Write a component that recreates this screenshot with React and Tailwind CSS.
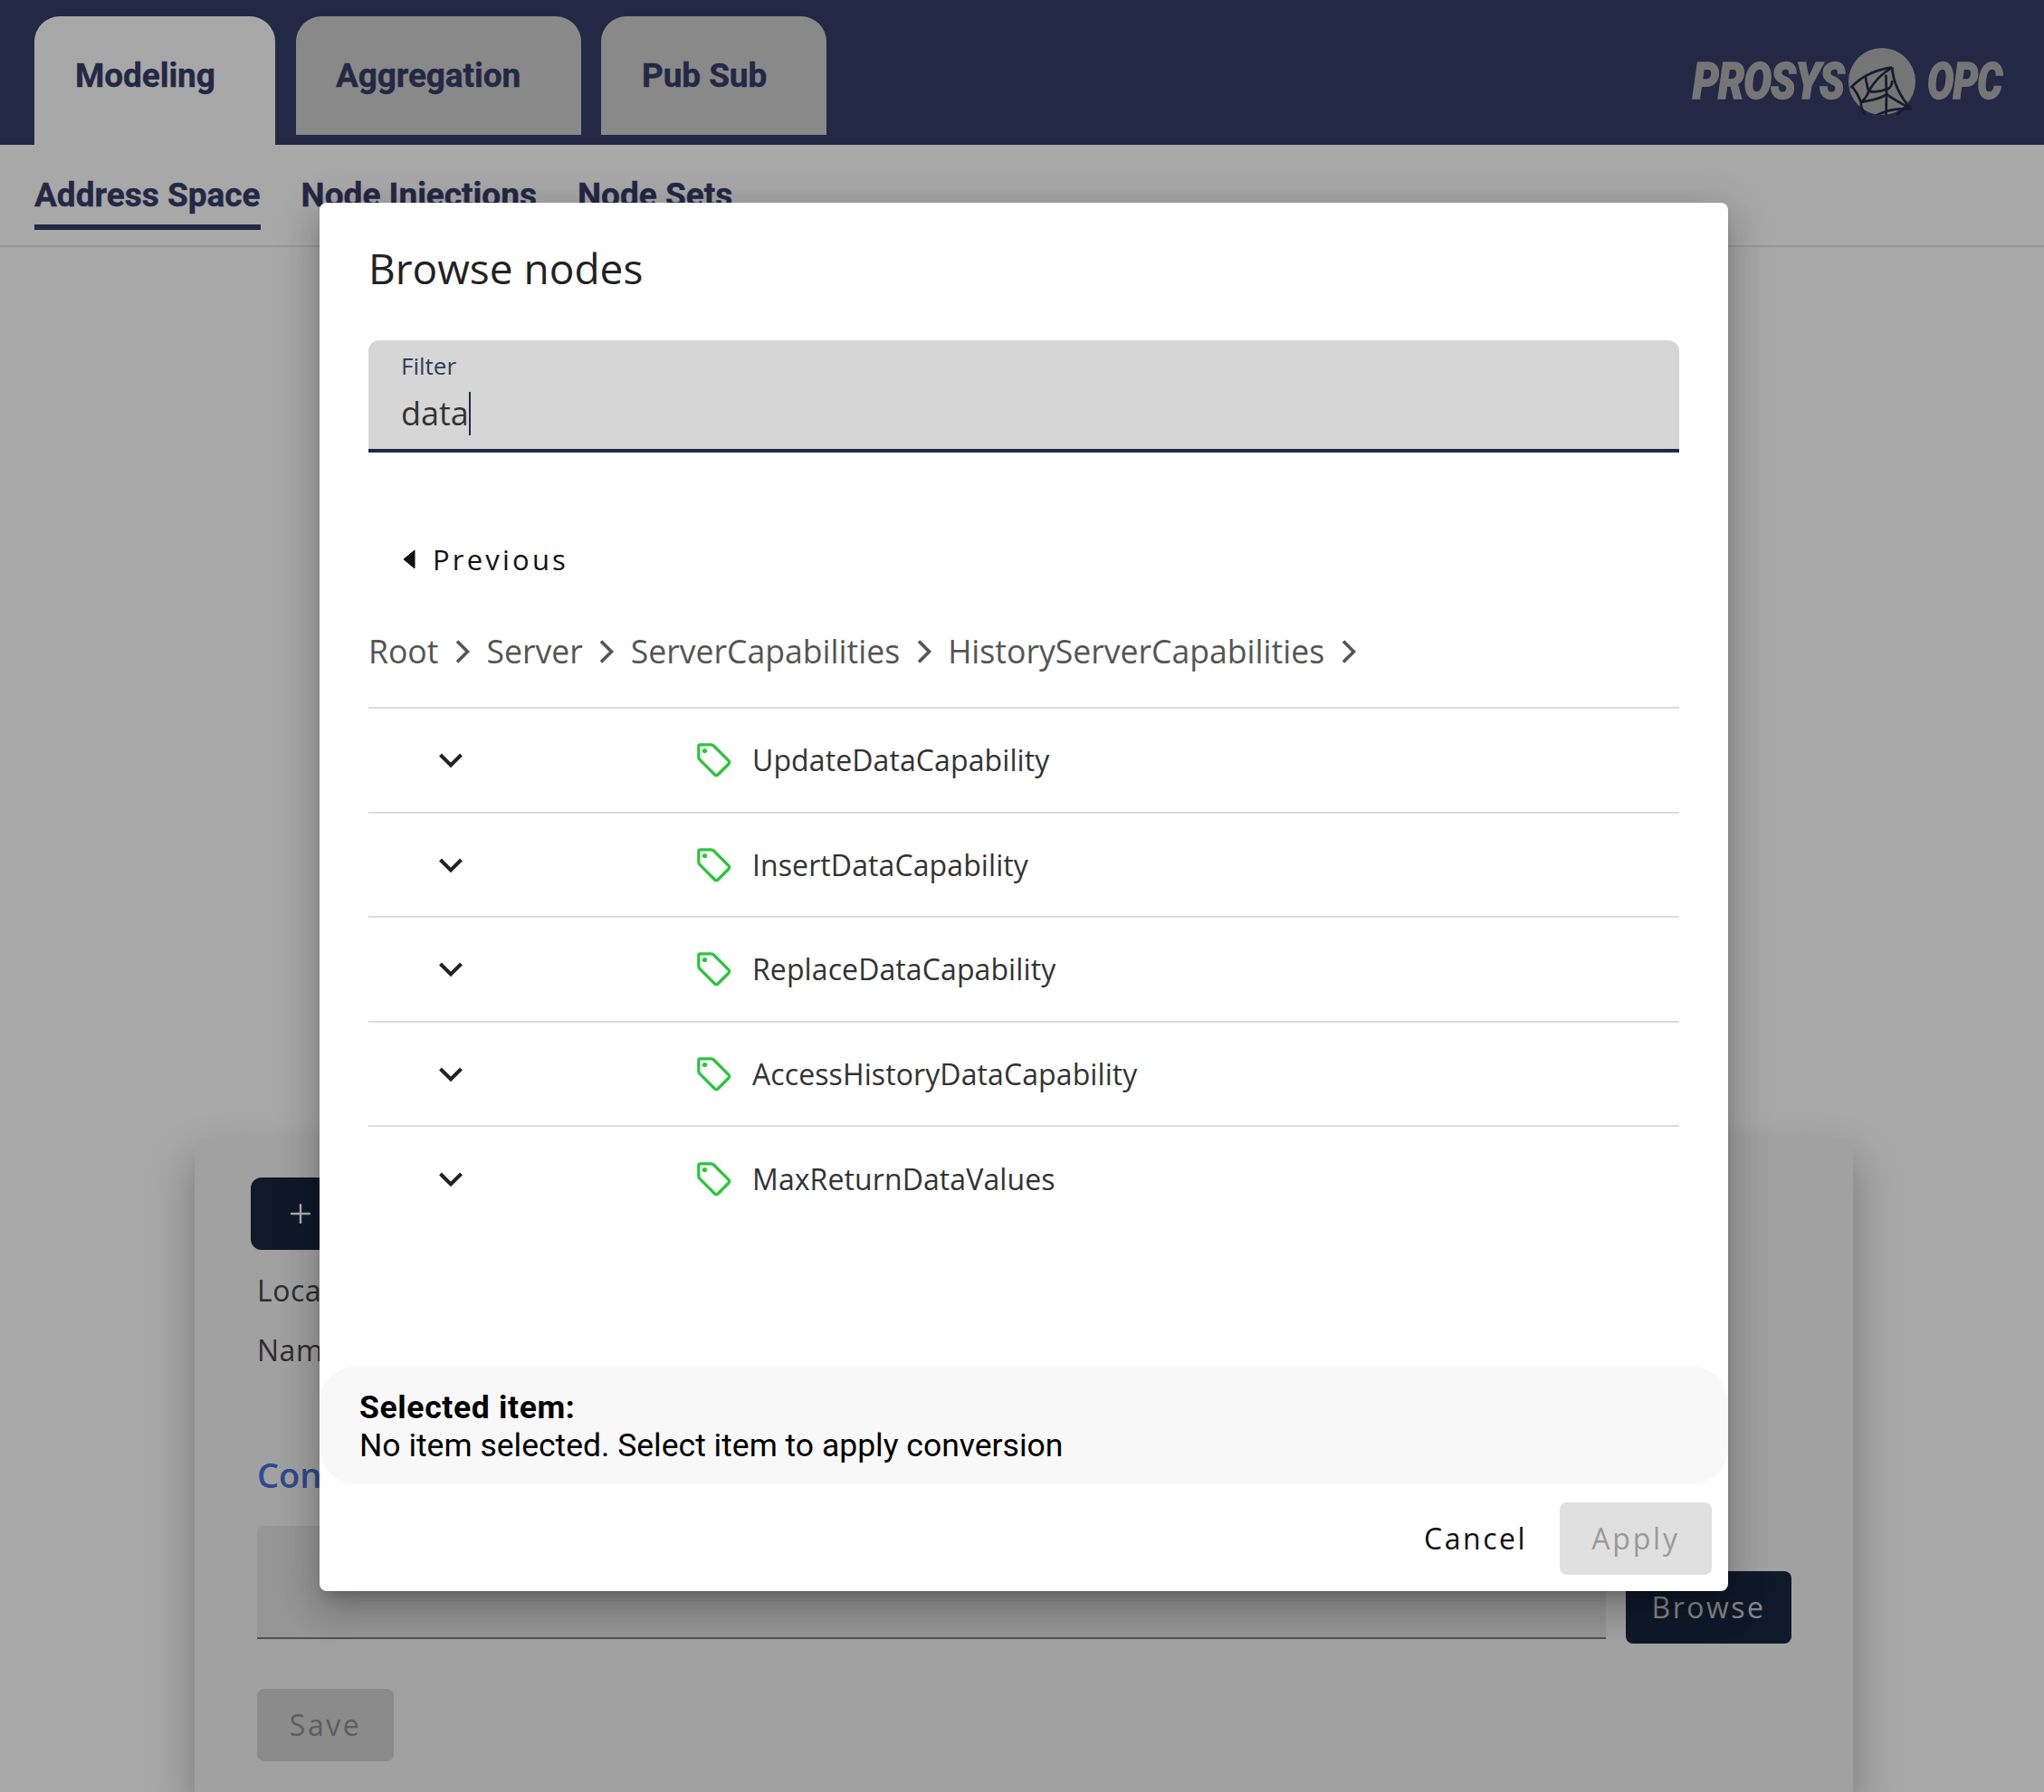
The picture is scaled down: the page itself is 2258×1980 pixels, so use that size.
import { Plus } from "lucide-react";

const nodes = [
  "UpdateDataCapability",
  "InsertDataCapability",
  "ReplaceDataCapability",
  "AccessHistoryDataCapability",
  "MaxReturnDataValues",
];

const crumbs = ["Root", "Server", "ServerCapabilities", "HistoryServerCapabilities"];

const openSans = "font-['Open_Sans',sans-serif]";
const roboto = "font-['Roboto',sans-serif]";

const TagIcon = () => (
  <svg width="38" height="38" viewBox="0 0 38 38" fill="none" className="shrink-0">
    <path
      d="M3.5 1.8H15.5C16.6 1.8 17.6 2.2 18.4 3L35 19.6C36 20.6 36 22 35 23L23 35C22 36 20.600 36 19.600 35L3 18.400C2.200 17.600 1.800 16.600 1.800 15.500V3.500C1.800 2.500 2.500 1.800 3.500 1.800Z"
      stroke="#2ac53c"
      strokeWidth="3.200"
      strokeLinejoin="round"
    />
    <circle cx="8.500" cy="8.500" r="2.600" fill="#2ac53c" />
  </svg>
);

const ChevronDown = () => (
  <svg width="28" height="18" viewBox="0 0 28 18" fill="none">
    <path d="M2.500 3L14 14.500L25.500 3" stroke="#222222" strokeWidth="4" />
  </svg>
);

const ChevronRight = () => (
  <svg width="18" height="28" viewBox="0 0 18 28" fill="none" className="shrink-0">
    <path d="M3 2.500L14.500 14L3 25.500" stroke="#555555" strokeWidth="3.600" />
  </svg>
);

const ProsysLogo = () => (
  <div className={`flex items-center text-[#adadad] italic font-black [-webkit-text-stroke:1.5px_#adadad] ${roboto}`}>
    <span className="text-[56px] leading-none scale-x-[0.82] origin-right tracking-[-1px]">PROSYS</span>
    <svg width="74" height="74" viewBox="19 17 216 216" className="ml-[5px] mr-[13px] shrink-0">
      <circle cx="127" cy="125" r="108" fill="#adadad" />
      <g fill="none" stroke="#232845" strokeWidth="8">
        <path d="M160 80C120 84 62 104 26 146" />
        <path d="M160 80C162 125 185 175 222 214" />
        <path d="M160 80C125 100 100 128 84 157" />
        <path d="M74 108C76 128 80 142 84 157C104 160 125 158 142 150C160 146 160 130 160 122" />
        <path d="M30 140C42 155 52 172 60 192C56 205 66 222 76 236" />
        <path d="M84 157C80 170 72 182 60 192C84 186 118 184 142 166" />
        <path d="M140 104C140 125 141 150 142 166C140 190 142 215 140 238" />
        <path d="M142 166C160 180 190 196 222 214C195 212 150 210 95 242" />
        <path d="M170 238L198 212" />
      </g>
    </svg>
    <span className="text-[56px] leading-none scale-x-[0.78] origin-left tracking-[-1px]">OPC</span>
  </div>
);

const Page = () => (
  <div className={`h-full bg-[#f8f8f8] ${roboto}`}>
    <header className="flex h-[160px] justify-between bg-[#343b66] pl-[38px] pr-[23px]">
      <div className="flex gap-[22px] pt-[18px] text-[37px] font-bold leading-none tracking-[-0.1px] text-[#343b66] [-webkit-text-stroke:0.4px_#343b66]">
        <div className="flex h-[142px] w-[266px] rounded-t-[28px] bg-[#f8f8f8] pl-[45px] pt-[47px]">Modeling</div>
        <div className="ml-px flex h-[131px] w-[315px] rounded-t-[28px] bg-[#cbcbcb] pl-[44px] pt-[47px]">Aggregation</div>
        <div className="flex h-[131px] w-[249px] rounded-t-[28px] bg-[#cbcbcb] pl-[45px] pt-[47px]">Pub Sub</div>
      </div>
      <div className="flex items-center pt-[20px]">
        <ProsysLogo />
      </div>
    </header>

    <nav className="flex h-[113px] gap-[45px] border-b-2 border-[#dfdfdf] px-[38px] text-[37px] font-bold leading-none text-[#343b66] [-webkit-text-stroke:0.4px_#343b66]">
      <div className="h-[94px] border-b-[6px] border-[#343b66] pt-[37px]">Address Space</div>
      <div className="pt-[37px]">Node Injections</div>
      <div className="pt-[37px]">Node Sets</div>
    </nav>

    <section className={`ml-[215px] mt-[985px] h-[722px] w-[1832px] rounded-t-[8px] bg-[#ededed] pl-[69px] pr-[68px] pt-[43px] shadow-[0_24px_50px_rgba(0,0,0,0.3)] ${openSans}`}>
      <div className="-ml-[7px] flex h-[80px] w-[300px] items-center rounded-[12px] bg-[#17263f] pl-[38px] text-white">
        <Plus size={34} strokeWidth={1.700} />
      </div>
      <div className="mt-[23px] text-[32px] font-medium leading-[44px] tracking-[0.5px] text-[#444444]">Loca</div>
      <div className="mt-[22px] text-[32px] font-medium leading-[44px] tracking-[0.5px] text-[#444444]">Nam</div>
      <div className="mt-[89px] text-[38px] font-semibold leading-[52px] text-[#456ed2]">Con</div>
      <div className="mt-[31px] flex items-end gap-[22px]">
        <div className="h-[125px] w-[1490px] rounded-t-[6px] border-b-2 border-[#777777] bg-[#dedede]" />
        <div className="mb-[-5px] flex h-[80px] w-[183px] items-center justify-center rounded-[8px] bg-[#17263f] text-[32px] tracking-[2.500px] text-[#c8c8c8]">
          Browse
        </div>
      </div>
      <div className="mt-[55px] flex h-[80px] w-[151px] items-center justify-center rounded-[8px] bg-[#cdcdcd] text-[32px] tracking-[2.500px] text-[#8a8a8a]">
        Save
      </div>
    </section>
  </div>
);

const BrowseDialog = () => (
  <div className={`absolute left-[353px] top-[224px] flex h-[1534px] w-[1556px] flex-col rounded-[8px] bg-white shadow-[0_11px_15px_-7px_rgba(0,0,0,0.2),0_24px_38px_3px_rgba(0,0,0,0.14),0_9px_46px_8px_rgba(0,0,0,0.12)] ${openSans}`}>
    <div className="flex flex-col px-[54px]">
      <h2 className="mt-[39px] text-[46px] font-normal leading-[66px] text-[#222222]">Browse nodes</h2>

      <div className="mt-[47px] h-[124px] rounded-t-[12px] border-b-[4px] border-[#1d2a4a] bg-[#d6d6d6] pl-[36px] pt-[11px]">
        <div className="text-[26px] leading-[34px] text-[#2f3d5c]">Filter</div>
        <div className="mt-[11px] flex h-[50px] items-center text-[36px] leading-none text-[#333333]">
          data
          <span className="h-[48px] w-[2px] bg-[#1d2a4a]" />
        </div>
      </div>

      <div className="mt-[88px] flex h-[60px] items-center pl-[38px] text-[31px] tracking-[3.200px] text-[#111111]">
        <svg width="14" height="22" viewBox="0 0 14 22" className="mr-[19px] shrink-0">
          <path d="M13 1V21L1 11Z" fill="#111111" stroke="#111111" strokeWidth="1" strokeLinejoin="round" />
        </svg>
        Previous
      </div>

      <div className="mt-[42px] flex h-[60px] items-center gap-[17.500px] text-[35.600px] text-[#555555]">
        {crumbs.map((crumb) => (
          <div key={crumb} className="flex items-center gap-[17.500px]">
            <span>{crumb}</span>
            <ChevronRight />
          </div>
        ))}
      </div>

      <ul className="mt-[31px]">
        {nodes.map((node) => (
          <li key={node} className="flex h-[115.6px] items-center border-t-2 border-[#dcdcdc] pt-px text-[32px] tracking-[0.1px] text-[#333333]">
            <div className="flex w-[182px] justify-center">
              <ChevronDown />
            </div>
            <div className="ml-[181px] flex items-center gap-[23px]">
              <TagIcon />
              <span>{node}</span>
            </div>
          </li>
        ))}
      </ul>
    </div>

    <div className={`mt-[151px] h-[130px] rounded-[40px] bg-[#f8f8f8] pl-[44px] pt-[24px] text-[35.500px] leading-[42px] text-black ${roboto}`}>
      <div className="font-bold tracking-[0.65px]">Selected item:</div>
      <div>No item selected. Select item to apply conversion</div>
    </div>

    <div className="mt-[20px] flex items-center justify-end pr-[18px] text-[32px] tracking-[2.800px]">
      <span className="mr-[36px] tracking-[2.500px] text-[#111111]">Cancel</span>
      <div className="flex h-[80px] w-[168px] items-center justify-center rounded-[8px] bg-[#e0e0e0] text-[#9a9a9a]">
        Apply
      </div>
    </div>
  </div>
);

export default function App() {
  return (
    <div className="relative h-[1980px] w-[2258px] overflow-hidden">
      <Page />
      <div className="absolute inset-0 bg-black/32" />
      <BrowseDialog />
    </div>
  );
}
